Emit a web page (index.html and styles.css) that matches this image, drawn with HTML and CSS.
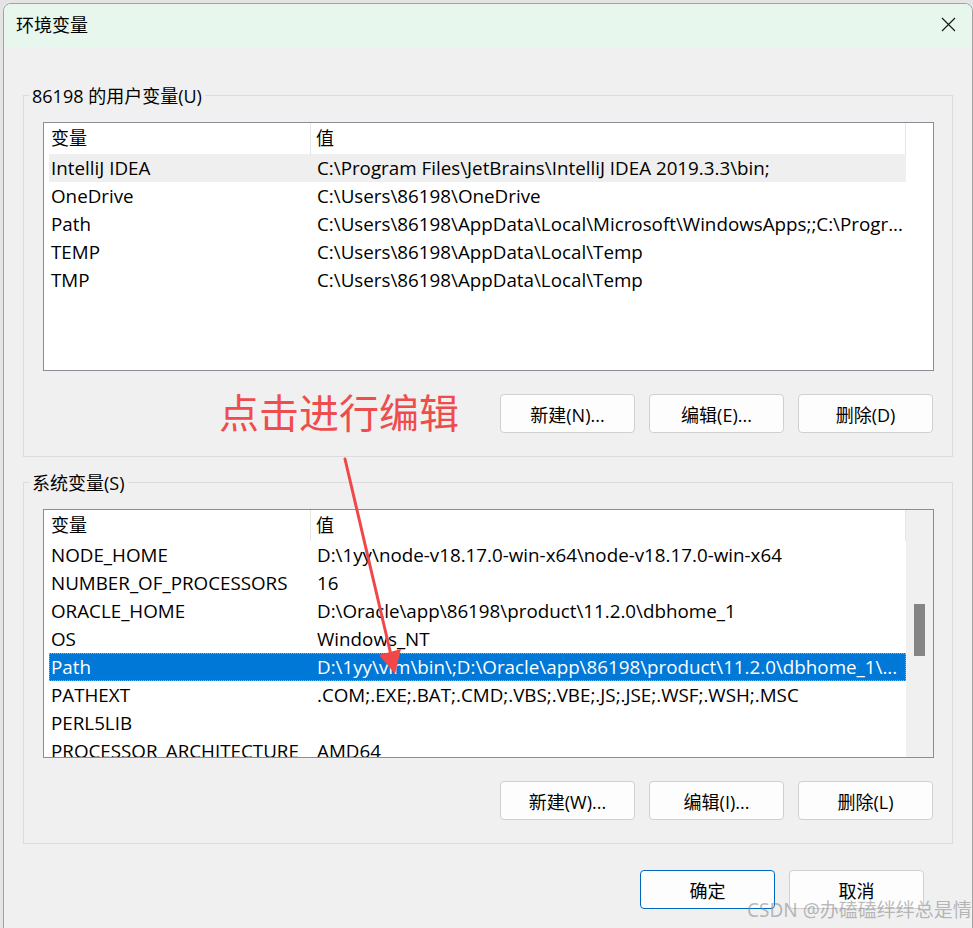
FILE: index.html
```html
<!DOCTYPE html>
<html lang="zh-CN">
<head>
<meta charset="utf-8">
<title>环境变量</title>
<link rel="stylesheet" href="styles.css">
</head>
<body>
<div class="screen">
  <div class="dialog">
    <div class="titlebar">
      <span class="title">环境变量</span>
      <svg class="close" width="15" height="15" viewBox="0 0 15 15"><path d="M1 1 L14 14 M14 1 L1 14" stroke="#1a1a1a" stroke-width="1.2" fill="none"/></svg>
    </div>
    <div class="content">
      <div class="group">
        <div class="legend">86198 的用户变量(U)</div>
        <div class="list">
          <div class="list-body">
            <div class="row head"><div class="c1">变量</div><div class="c2">值</div></div>
            <div class="row hover"><div class="c1">IntelliJ IDEA</div><div class="c2">C:\Program Files\JetBrains\IntelliJ IDEA 2019.3.3\bin;</div></div>
            <div class="row"><div class="c1">OneDrive</div><div class="c2">C:\Users\86198\OneDrive</div></div>
            <div class="row"><div class="c1">Path</div><div class="c2">C:\Users\86198\AppData\Local\Microsoft\WindowsApps;;C:\Progr...</div></div>
            <div class="row"><div class="c1">TEMP</div><div class="c2">C:\Users\86198\AppData\Local\Temp</div></div>
            <div class="row"><div class="c1">TMP</div><div class="c2">C:\Users\86198\AppData\Local\Temp</div></div>
          </div>
        </div>
        <div class="buttons">
          <button class="btn">新建(N)...</button>
          <button class="btn">编辑(E)...</button>
          <button class="btn">删除(D)</button>
        </div>
      </div>

      <div class="group second">
        <div class="legend">系统变量(S)</div>
        <div class="list">
          <div class="list-body">
            <div class="row head"><div class="c1">变量</div><div class="c2">值</div></div>
            <div class="row"><div class="c1">NODE_HOME</div><div class="c2">D:\1yy\node-v18.17.0-win-x64\node-v18.17.0-win-x64</div></div>
            <div class="row"><div class="c1">NUMBER_OF_PROCESSORS</div><div class="c2">16</div></div>
            <div class="row"><div class="c1">ORACLE_HOME</div><div class="c2">D:\Oracle\app\86198\product\11.2.0\dbhome_1</div></div>
            <div class="row"><div class="c1">OS</div><div class="c2">Windows_NT</div></div>
            <div class="row selected"><div class="c1">Path</div><div class="c2">D:\1yy\vim\bin\;D:\Oracle\app\86198\product\11.2.0\dbhome_1\...</div></div>
            <div class="row"><div class="c1">PATHEXT</div><div class="c2">.COM;.EXE;.BAT;.CMD;.VBS;.VBE;.JS;.JSE;.WSF;.WSH;.MSC</div></div>
            <div class="row"><div class="c1">PERL5LIB</div><div class="c2"></div></div>
            <div class="row"><div class="c1">PROCESSOR_ARCHITECTURE</div><div class="c2">AMD64</div></div>
          </div>
          <div class="scrollbar"><div class="thumb"></div></div>
        </div>
        <div class="buttons">
          <button class="btn">新建(W)...</button>
          <button class="btn">编辑(I)...</button>
          <button class="btn">删除(L)</button>
        </div>
      </div>

      <div class="footer">
        <button class="btn primary">确定</button>
        <button class="btn">取消</button>
      </div>
    </div>
  </div>

  <div class="annotation">点击进行编辑</div>
  <svg class="arrow" width="973" height="928" viewBox="0 0 973 928">
    <line x1="345" y1="459" x2="391" y2="655" stroke="#f04848" stroke-width="3" stroke-linecap="round"/>
    <polygon points="379,655 401,649 395,674" fill="#f04848"/>
  </svg>
  <div class="watermark">CSDN @办磕磕绊绊总是情</div>
</div>
</body>
</html>
```

FILE: styles.css
```css
* { box-sizing: border-box; }

html, body {
  margin: 0;
  padding: 0;
}

body {
  width: 973px;
  height: 928px;
  overflow: hidden;
  background: #e4e4e4;
  font-family: "Open Sans", "Noto Sans CJK SC", sans-serif;
  font-size: 18px;
  color: #000;
}

.screen {
  position: relative;
  width: 973px;
  height: 928px;
  padding: 3px 0 0 3px;
}

.dialog {
  width: 970px;
  height: 960px;
  background: #f0f0f0;
  border: 1px solid #a2a2a2;
  border-radius: 8px 8px 0 0;
}

.titlebar {
  height: 43px;
  background: #e7f7ed;
  border-radius: 7px 7px 0 0;
  display: flex;
  align-items: center;
  justify-content: space-between;
  padding: 0 16px 3px 12px;
}

.title {
  font-family: "Noto Sans CJK SC", sans-serif;
  font-size: 18px;
  line-height: 24px;
}

.close {
  display: block;
  margin-top: 1px;
}

.content {
  padding: 48px 19px 0 19px;
}

.group {
  border: 1px solid #dcdcdc;
  padding: 0 18px 23px 19px;
}

.group.second {
  margin-top: 25px;
}

.legend {
  width: fit-content;
  margin: -12px 0 0 -14px;
  padding: 0 3px;
  line-height: 24px;
  height: 24px;
  background: #f0f0f0;
  white-space: nowrap;
}

.list {
  margin-top: 14px;
  height: 249px;
  border: 1px solid #8b8d96;
  background: #fff;
  display: flex;
  overflow: hidden;
  font-size: 18.8px;
}

.list-body {
  flex: 1;
  padding-left: 5px;
  overflow: hidden;
}

.row {
  display: flex;
  width: 857px;
  height: 28px;
  line-height: 28px;
  white-space: nowrap;
}

.row .c1 {
  width: 262px;
  flex: none;
  padding-left: 2px;
  overflow: hidden;
}

.row .c2 {
  flex: 1;
  padding-left: 6px;
  overflow: hidden;
}

.row.head {
  height: 31px;
  line-height: 31px;
  font-size: 18px;
}

.row.head .c1 {
  border-right: 1px solid #e5e5e5;
}

.row.head .c2 {
  border-right: 1px solid #e5e5e5;
  padding-left: 5px;
}

.row.hover {
  background: #efefef;
}

.row.selected {
  background: #0078d7;
  color: #fff;
  outline: 1px dotted #e8a040;
  outline-offset: -1px;
}

.scrollbar {
  width: 27px;
  flex: none;
  background: #f0f0f0;
  display: flex;
  justify-content: center;
}

.thumb {
  width: 11px;
  height: 52px;
  margin-top: 94px;
  background: #858585;
}

.buttons {
  display: flex;
  justify-content: flex-end;
  gap: 14px;
  margin-top: 23px;
  margin-right: 1px;
}

.btn {
  width: 135px;
  height: 39px;
  border: 1px solid #d0d0d0;
  border-radius: 4px;
  background: #fdfdfd;
  font-family: "Open Sans", "Noto Sans CJK SC", sans-serif;
  font-size: 18px;
  color: #000;
  padding: 0;
}

.btn.primary {
  border-color: #0067c0;
}

.footer {
  display: flex;
  justify-content: flex-end;
  gap: 14px;
  margin-top: 26px;
  margin-right: 29px;
}

.annotation {
  position: absolute;
  left: 219px;
  top: 383px;
  font-family: "Noto Sans CJK SC", sans-serif;
  font-size: 40px;
  line-height: 56px;
  color: #ef4d4d;
  white-space: nowrap;
}

.arrow {
  position: absolute;
  left: 0;
  top: 0;
  pointer-events: none;
}

.watermark {
  position: absolute;
  left: 747px;
  top: 897px;
  font-family: "Noto Sans", "Noto Sans CJK SC", sans-serif;
  font-size: 19px;
  line-height: 26px;
  color: rgba(130, 130, 130, 0.55);
  white-space: nowrap;
}
```
